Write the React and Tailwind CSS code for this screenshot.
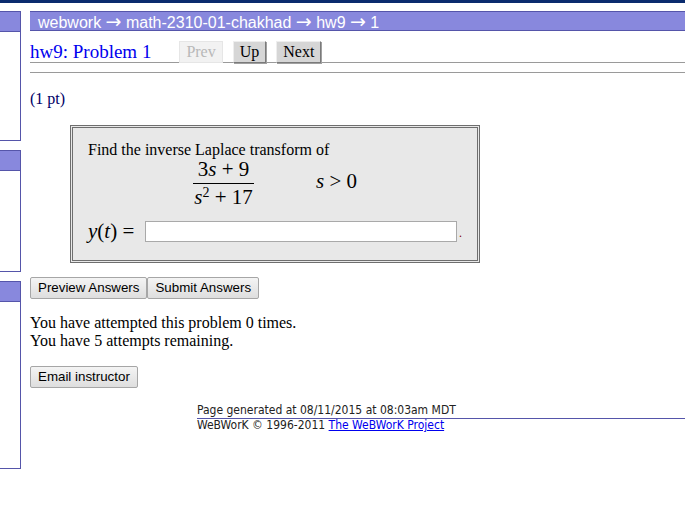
import React from 'react';

const serif = { fontFamily: '"Liberation Serif", "Times New Roman", serif' };

function SideBox({ height }) {
  return (
    <div className="border-y border-r border-[#5555aa] w-[21px]" style={{ height }}>
      <div className="h-[20px] bg-[#8888dd] border-b border-[#5555aa]"></div>
    </div>
  );
}

function Arrow() {
  return (
    <span className="text-[19px] leading-none" style={{ fontFamily: '"DejaVu Sans", sans-serif' }}>
      →
    </span>
  );
}

function NavButton({ children, disabled }) {
  return (
    <span
      className={
        disabled
          ? 'h-[22px] px-[6px] leading-[20px] text-[16px] bg-[#f2f2f2] text-[#b8b8b8] border border-[#e6e6e6]'
          : 'h-[22px] px-[6px] leading-[20px] text-[16px] bg-[#d6d6d6] text-black border border-t-[#eeeeee] border-l-[#eeeeee] border-r-[#7a7a7a] border-b-[#7a7a7a] shadow-[1px_1px_0_#a0a0a0]'
      }
    >
      {children}
    </span>
  );
}

function FormButton({ children, className = '' }) {
  return (
    <button
      className={`h-[22px] px-[7px] text-[13.33px] text-black bg-gradient-to-b from-[#f4f4f4] to-[#dedede] border border-[#a6a6a6] rounded-[2px] ${className}`}
      style={{ fontFamily: '"Liberation Sans", Arial, sans-serif' }}
    >
      {children}
    </button>
  );
}

export default function App() {
  return (
    <div className="w-[685px] h-[511px] bg-white overflow-hidden relative" style={serif}>
      <div className="h-[3px] bg-[#0a2b6e]"></div>

      <div className="flex pt-[8px]">
        {/* left nav */}
        <div className="flex flex-col w-[21px] shrink-0">
          <SideBox height={130} />
          <div className="h-[9px]"></div>
          <SideBox height={122} />
          <div className="h-[9px]"></div>
          <SideBox height={188} />
        </div>

        {/* main */}
        <div className="ml-[9px] flex-1 min-w-0">
          <div
            className="h-[20px] bg-[#8888dd] border-y border-[#5555aa] text-white text-[16px] leading-[18px] pl-[8px] whitespace-nowrap"
            style={{ fontFamily: '"Liberation Sans", Arial, sans-serif' }}
          >
            webwork <Arrow /> math-2310-01-chakhad <Arrow /> hw9 <Arrow /> 1
          </div>

          <div className="flex items-start h-[32px] pt-[10px] border-b border-[#9a9a9a]">
            <span className="text-[19px] leading-[21px] text-[#0000ee]">hw9: Problem 1</span>
            <div className="flex gap-[10px] ml-[28px]">
              <NavButton disabled>Prev</NavButton>
              <NavButton>Up</NavButton>
              <NavButton>Next</NavButton>
            </div>
          </div>
          <div className="mt-[9px] border-t border-[#9a9a9a]"></div>

          <div className="mt-[17px] text-[16px] leading-[18px] text-[#000066]">(1 pt)</div>

          <div className="mt-[17px] ml-[40px] w-[410px] h-[138px] border-[3px] border-double border-[#6e6e6e] bg-[#e8e8e8] pl-[15px] pt-[13px]">
            <div className="text-[16px] leading-[18px] text-black">Find the inverse Laplace transform of</div>
            <div className="flex items-center">
              <div className="ml-[105px] flex flex-col items-center text-[21px] leading-[21px]">
                <span>
                  3<i>s</i> + 9
                </span>
                <span className="w-[61px] border-t border-black my-[3px]"></span>
                <span>
                  <i>s</i>
                  <sup className="text-[14px]">2</sup> + 17
                </span>
              </div>
              <div className="ml-[62px] text-[21px] mt-[-3px]">
                <i>s</i> &gt; 0
              </div>
            </div>
            <div className="flex items-center mt-[12px]">
              <span className="text-[21px] leading-[22px] w-[57px]">
                <i>y</i>(<i>t</i>) =
              </span>
              <div className="w-[312px] h-[21px] bg-white border border-[#a9a9a9]"></div>
              <span className="text-[12px] text-[#800000] ml-[2px] mt-[4px]">.</span>
            </div>
          </div>

          <div className="flex mt-[14px]">
            <FormButton>Preview Answers</FormButton>
            <FormButton>Submit Answers</FormButton>
          </div>

          <div className="mt-[15px] text-[16px] leading-[18px] text-black">
            <div>You have attempted this problem 0 times.</div>
            <div>You have 5 attempts remaining.</div>
          </div>

          <div className="mt-[14px]">
            <FormButton>Email instructor</FormButton>
          </div>

          <div
            className="ml-[167px] mt-[16px] text-[12px] leading-[13px] text-[#222]"
            style={{ fontFamily: '"DejaVu Sans Condensed", "DejaVu Sans", Tahoma, sans-serif' }}
          >
            <div className="border-b border-[#5555aa] pb-[1px]">Page generated at 08/11/2015 at 08:03am MDT</div>
            <div>
              WeBWorK © 1996-2011 <span className="text-[#0000ee] underline">The WeBWorK Project</span>
            </div>
          </div>
        </div>
      </div>
    </div>
  );
}
